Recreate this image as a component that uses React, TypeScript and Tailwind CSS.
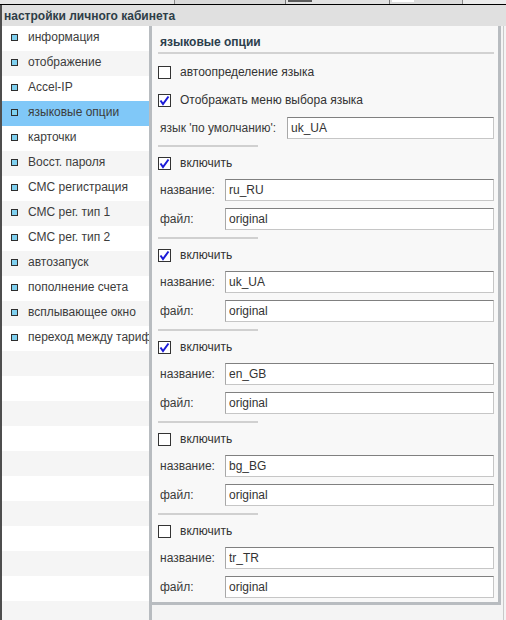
import { useState } from "react";

const menu = [
  "информация",
  "отображение",
  "Accel-IP",
  "языковые опции",
  "карточки",
  "Восст. пароля",
  "СМС регистрация",
  "СМС рег. тип 1",
  "СМС рег. тип 2",
  "автозапуск",
  "пополнение счета",
  "всплывающее окно",
  "переход между тарифами",
];

const initialLangs = [
  { on: true, name: "ru_RU", file: "original" },
  { on: true, name: "uk_UA", file: "original" },
  { on: true, name: "en_GB", file: "original" },
  { on: false, name: "bg_BG", file: "original" },
  { on: false, name: "tr_TR", file: "original" },
];

const Check = ({ checked, onClick }: { checked: boolean; onClick: () => void }) => (
  <button
    type="button"
    onClick={onClick}
    className="relative h-[13px] w-[13px] shrink-0 border border-[#333] bg-white p-0"
  >
    {checked && (
      <svg viewBox="0 0 11 11" className="absolute left-0 top-0 h-[11px] w-[11px]">
        <path d="M1.5 5.5 L4 9 L9.5 1.5" fill="none" stroke="#1b1bd8" strokeWidth="2" />
      </svg>
    )}
  </button>
);

const Field = ({ label, value, width }: { label: string; value: string; width: string }) => (
  <div className="flex h-[22px] items-center">
    <span className={`${width} shrink-0 pl-[2px] text-[#3a3a3a]`}>{label}</span>
    <input
      defaultValue={value}
      className="h-[22px] min-w-0 flex-1 border border-[#c6c6c6] border-t-[#808080] border-l-[#a8a8a8] bg-white px-[3px] text-[12px] text-[#333] outline-none"
    />
  </div>
);

const Sep = () => <div className="h-[2px] w-[100px] bg-[#d0d0d0]" />;

export default function App() {
  const [auto, setAuto] = useState(false);
  const [showMenu, setShowMenu] = useState(true);
  const [langs, setLangs] = useState(initialLangs);
  const active = 3;

  return (
    <div className="h-[620px] w-[506px] overflow-hidden bg-[#f4f4f4] font-['Liberation_Sans',Arial,sans-serif] text-[12px] text-[#333]">
      {/* cropped toolbar above */}
      <div className="flex h-[4px]">
        <div className="w-[174px] bg-[#e6e6e6]" />
        <div className="w-px bg-[#8a8a8a]" />
        <div className="w-[110px] bg-[#dadada]" />
        <div className="w-px bg-[#777]" />
        <div className="flex w-[103px] flex-col bg-[#e2e2e2]">
          <div className="ml-[2px] h-[2px] w-[24px] bg-[#5a5a5a]" />
        </div>
        <div className="w-px bg-[#777]" />
        <div className="flex w-[72px] flex-col bg-[#dcdcdc]">
          <div className="ml-[2px] h-[2px] w-[22px] bg-white" />
        </div>
        <div className="w-px bg-[#888]" />
        <div className="flex-1 bg-[#ececec]" />
      </div>
      <div className="h-px bg-black" />

      <div className="flex flex-col border-l-2 border-[#4e4e4e]">
        <div className="flex h-[21px] items-center bg-[#e0e0e0] pl-[2px] font-bold text-[#2e3d47]">
          настройки личного кабинета
        </div>

        <div className="flex">
          <div className="w-[150px] shrink-0 border-r-[3px] border-[#b8bcc0]">
            {Array.from({ length: 24 }).map((_, i) => (
              <div
                key={i}
                className={`flex h-[25px] items-center overflow-hidden whitespace-nowrap pb-[3px] pl-[9px] ${
                  i === active ? "bg-[#80c8f8]" : i % 2 === 0 ? "bg-white" : "bg-[#f5f5f5]"
                }`}
              >
                {menu[i] && (
                  <>
                    <span className="h-[7px] w-[7px] shrink-0 border border-[#2e2e2e] bg-[#7fd0ef]" />
                    <span className="ml-[10px] text-[#3c3c3c]">{menu[i]}</span>
                  </>
                )}
              </div>
            ))}
          </div>

          <div className="flex-1 pr-[2px]">
            <div className="h-[600px] border-r border-[#c9c9c9] pr-[2px]">
              <div className="flex flex-col border-r-[3px] border-b-[3px] border-[#b8bcc0] bg-[#f8f8f8] pb-[4px] pl-[6px] pr-[4px] pt-[8px]">
                <div className="h-[16px] pl-[2px] font-bold leading-[16px] text-[#2c3e4c]">
                  языковые опции
                </div>
                <div className="mt-[2px] h-[2px] bg-[#d2d2d2]" />

                <div className="mt-[8px] flex h-[20px] items-center">
                  <Check checked={auto} onClick={() => setAuto(!auto)} />
                  <span className="ml-[9px]">автоопределение языка</span>
                </div>
                <div className="mt-[8px] flex h-[20px] items-center">
                  <Check checked={showMenu} onClick={() => setShowMenu(!showMenu)} />
                  <span className="ml-[9px]">Отображать меню выбора языка</span>
                </div>
                <div className="mt-[7px]">
                  <Field label="язык 'по умолчанию':" value="uk_UA" width="w-[129px]" />
                </div>

                {langs.map((l, i) => (
                  <div
                    key={l.name}
                    className={`flex flex-col ${i === 0 ? "mt-[6px]" : "mt-[7px]"}`}
                  >
                    <Sep />
                    <div className="mt-[6px] flex h-[20px] items-center">
                      <Check
                        checked={l.on}
                        onClick={() =>
                          setLangs(langs.map((x, j) => (j === i ? { ...x, on: !x.on } : x)))
                        }
                      />
                      <span className="ml-[9px]">включить</span>
                    </div>
                    <div className="mt-[6px]">
                      <Field label="название:" value={l.name} width="w-[67px]" />
                    </div>
                    <div className="mt-[7px]">
                      <Field label="файл:" value={l.file} width="w-[67px]" />
                    </div>
                  </div>
                ))}
              </div>
            </div>
          </div>
        </div>
      </div>
    </div>
  );
}
